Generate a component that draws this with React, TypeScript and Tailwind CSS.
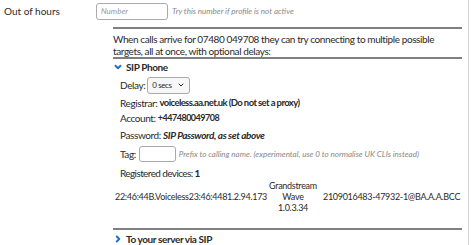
import { ChevronDown, ChevronRight } from "lucide-react";

export default function App() {
  return (
    <div className="relative h-[245px] w-[474px] overflow-hidden bg-white text-[10px] tracking-[-0.4px] text-[#2a2a2a] [font-family:Lato,'Liberation_Sans',sans-serif]">
      {/* page edge */}
      <div className="absolute right-[5px] top-0 h-full w-px bg-[#d4d4d4]" />

      {/* out of hours row */}
      <div className="flex h-[22px] items-center">
        <div className="w-[96px] pl-[4px] tracking-normal">Out of hours</div>
        <input
          className="h-[17px] w-[72px] rounded-[3px] border border-[#aaa] px-[4px] text-[8px] italic tracking-normal placeholder:text-[#999]"
          placeholder="Number"
        />
        <span className="ml-[4px] text-[8px] italic tracking-normal text-[#888]">Try this number if profile is not active</span>
      </div>

      {/* sip targets */}
      <div className="ml-[113px] mr-[12px] mt-[5px]">
        <div className="border-y-2 border-[#808080] pt-[4px] leading-[12px]">
          When calls arrive for 07480 049708 they can try connecting to multiple possible targets, all at once, with optional delays:
        </div>

        <div className="flex h-[16px] items-center gap-[3px] font-bold">
          <ChevronDown size={10} strokeWidth={4.5} className="text-[#1e6fc7]" />
          <span>SIP Phone</span>
        </div>

        <div className="pl-[7px]">
          <div className="mt-[1px] flex h-[18px] items-center gap-[2px]">
            <span>Delay:</span>
            <div className="flex h-[17px] w-[43px] items-center justify-between rounded-[3px] border border-[#aaa] bg-[#f7f7f7] px-[4px] text-[8px]">
              <span>0 secs</span>
              <ChevronDown size={8} strokeWidth={3} />
            </div>
          </div>
          <div className="mt-[1px] flex h-[16px] items-center">
            <span>Registrar:&nbsp;</span>
            <b className="text-[9.5px] tracking-[-0.6px]">voiceless.aa.net.uk (Do not set a proxy)</b>
          </div>
          <div className="flex h-[14px] items-center">
            <span>Account:&nbsp;</span>
            <b className="text-[9px] tracking-[-0.5px]">+447480049708</b>
          </div>
          <div className="mt-[2px] flex h-[16px] items-center">
            <span>Password:&nbsp;</span>
            <b className="italic">SIP Password, as set above</b>
          </div>
          <div className="mt-[2px] flex h-[18px] items-center gap-[3px]">
            <span>Tag:</span>
            <input className="h-[16px] w-[37px] rounded-[3px] border border-[#aaa]" />
            <span className="text-[8px] italic tracking-normal text-[#888]">
              Prefix to calling name. (experimental, use 0 to normalise UK CLIs instead)
            </span>
          </div>
          <div className="mt-[3px] flex h-[14px] items-center tracking-[-0.6px]">
            <span>Registered devices:&nbsp;</span>
            <b>1</b>
          </div>
        </div>

        <table className="ml-[2px] border-collapse text-[9px] leading-[11px] tracking-[-0.3px]">
          <tbody>
            <tr>
              <td className="p-0">22:46:44B.Voiceless</td>
              <td className="p-0">23:46:44</td>
              <td className="p-0">81.2.94.173</td>
              <td className="w-[52px] p-0 text-center">Grandstream Wave 1.0.3.34</td>
              <td className="p-0 pl-[4px]">2109016483-47932-1@BA.A.A.BCC</td>
            </tr>
          </tbody>
        </table>

        <div className="mt-[15px] border-t-2 border-[#808080]">
          <div className="flex h-[18px] items-center gap-[3px] font-bold">
            <ChevronRight size={10} strokeWidth={4.5} className="text-[#1e6fc7]" />
            <span>To your server via SIP</span>
          </div>
        </div>
      </div>
    </div>
  );
}
